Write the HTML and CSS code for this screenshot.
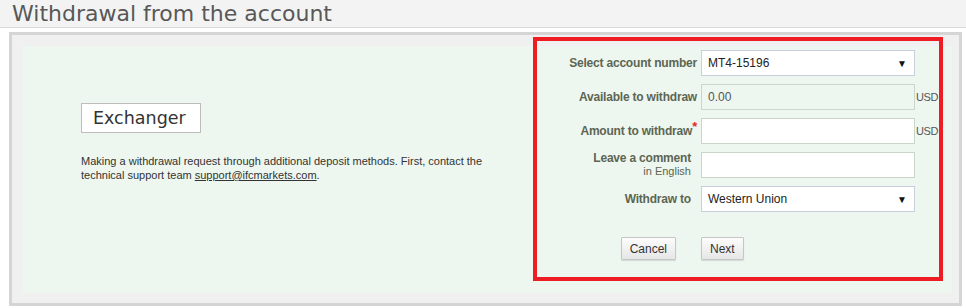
FILE: index.html
```html
<!DOCTYPE html>
<html lang="en">
<head>
  <meta charset="UTF-8">
  <meta name="viewport" content="width=device-width, initial-scale=1.0">
  <title>Withdrawal from the account</title>
  <link rel="stylesheet" href="styles.css">
</head>
<body>
  <div class="page-title">
    <h1>Withdrawal from the account</h1>
  </div>

  <div class="panel">
    <div class="content">
      <div class="info">
        <div class="method">Exchanger</div>
        <p class="note">Making a withdrawal request through additional deposit methods. First, contact the technical support team <a href="#">support@ifcmarkets.com</a>.</p>
      </div>

      <form class="withdraw-form">
        <div class="row">
          <label class="label">Select account number</label>
          <div class="field select"><span>MT4-15196</span><span class="arrow">&#9660;</span></div>
          <span class="unit"></span>
        </div>
        <div class="row">
          <label class="label">Available to withdraw</label>
          <div class="field readonly">0.00</div>
          <span class="unit">USD</span>
        </div>
        <div class="row">
          <label class="label">Amount to withdraw<span class="req">*</span></label>
          <input class="field" type="text">
          <span class="unit">USD</span>
        </div>
        <div class="row">
          <label class="label wide">Leave a comment<small>in English</small></label>
          <input class="field" type="text">
          <span class="unit"></span>
        </div>
        <div class="row">
          <label class="label wide">Withdraw to</label>
          <div class="field select"><span>Western Union</span><span class="arrow">&#9660;</span></div>
          <span class="unit"></span>
        </div>
        <div class="row buttons">
          <div class="cancel-cell"><button type="button">Cancel</button></div>
          <div><button type="button">Next</button></div>
        </div>
      </form>
    </div>
  </div>
</body>
</html>
```

FILE: styles.css
```css
* {
  box-sizing: border-box;
}

body {
  margin: 0;
  font-family: 'Liberation Sans', Arial, sans-serif;
  background: #fff;
}

.page-title {
  height: 28px;
  background: #f3f3f3;
  border-bottom: 1px solid #dadada;
  padding-left: 12px;
}

.page-title h1 {
  margin: 0;
  font-family: 'DejaVu Sans', Verdana, sans-serif;
  font-weight: normal;
  font-size: 22px;
  line-height: 27px;
  color: #585858;
}

.panel {
  margin: 4px 4px 0 9px;
  border: 3px solid #d5d5d5;
  background: #f0f0f0;
  padding: 11px 7px 10px 11px;
}

.content {
  display: flex;
  height: 247px;
  background: #eef7ef;
  padding-left: 58px;
}

.info {
  width: 452px;
  padding-top: 57px;
}

.method {
  display: inline-block;
  width: 120px;
  height: 30px;
  background: #fff;
  border: 1px solid #bdbdbd;
  font-family: 'DejaVu Sans', Verdana, sans-serif;
  font-size: 17.5px;
  line-height: 28px;
  color: #333;
  padding-left: 11px;
}

.note {
  margin: 21px 0 0;
  width: 430px;
  font-size: 11px;
  line-height: 14px;
  color: #333;
}

.note a {
  color: #333;
}

.withdraw-form {
  margin-top: -9px;
  width: 410px;
  height: 244px;
  border: 4px solid #ee1d23;
  padding-top: 9px;
}

.row {
  display: grid;
  grid-template-columns: 164px 214px auto;
  align-items: center;
  margin-bottom: 8px;
}

.label {
  text-align: right;
  padding-right: 4px;
  font-size: 12px;
  line-height: 13px;
  letter-spacing: -0.2px;
  font-weight: bold;
  color: #5d6553;
}

.label.wide {
  padding-right: 10px;
}

.label small {
  display: block;
  font-size: 11px;
  font-weight: normal;
  letter-spacing: 0;
  line-height: 13px;
}

.req {
  color: #e32b2b;
  font-size: 13px;
  vertical-align: 4px;
  line-height: 0;
}

.field {
  height: 26px;
  width: 214px;
  background: #fff;
  border: 1px solid #c9d6c9;
  font-family: 'Liberation Sans', Arial, sans-serif;
  font-size: 12px;
  color: #222;
  padding: 0 6px;
  display: flex;
  align-items: center;
}

.field.select {
  justify-content: space-between;
  border-color: #c9cfdc;
}

.arrow {
  font-size: 10px;
  color: #111;
  margin-right: 1px;
}

.field.readonly {
  background: #eef7ef;
  color: #555;
}

.unit {
  font-size: 11px;
  letter-spacing: -0.4px;
  color: #555;
  padding-left: 1px;
}

.buttons {
  margin-top: 25px;
  grid-template-columns: 164px auto;
}

.cancel-cell {
  text-align: right;
  padding-right: 25px;
}

.buttons button {
  height: 23px;
  padding: 0 8px;
  font-family: 'Liberation Sans', Arial, sans-serif;
  font-size: 12px;
  color: #333;
  background: linear-gradient(#fcfcfc, #e6e6e6);
  border: 1px solid #c6c6c6;
  border-radius: 1px;
  box-shadow: 0 1px 1px rgba(0, 0, 0, 0.12);
}
```
